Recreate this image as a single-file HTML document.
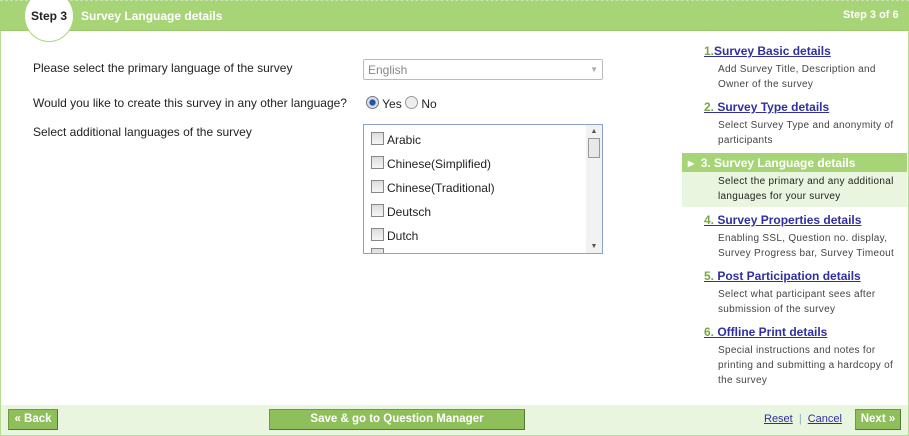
<html><head><style>
body{margin:0;width:909px;height:436px;font-family:"Liberation Sans",sans-serif;background:#fff;position:relative;overflow:hidden}
.a{position:absolute}
.hdr{left:0;top:0;width:909px;height:29px;background:#a8d478;border-top:1px dashed #c8e4b0;border-bottom:1px solid #9cc96c}
.frame{left:0;top:0;width:907px;height:434px;border:1px solid #b6dc94}
.circ{left:24px;top:-10px;width:48px;height:50px;border-radius:50%;background:#fff;border:1px solid #a8d478}
.lbl{font-size:12px;color:#222}
.item{font-size:12px;font-weight:bold;color:#2f2fa0;text-decoration:underline}
.num{color:#78a844;text-decoration:none;display:inline}
.desc{font-size:10px;color:#444;line-height:15px;width:185px;letter-spacing:0.3px}
.btn{background:#8fbf5a;border:1px solid #6e9a42;border-bottom-color:#4f7a2c;border-right-color:#4f7a2c;color:#fff;font-size:11.5px;font-weight:bold;text-align:center;line-height:19px;height:19px}
.cb{display:inline-block;width:11px;height:11px;border:1px solid #888;background:linear-gradient(#ddd,#f6f6f6);vertical-align:-1px;margin-right:3px}
.opt{font-size:12px;color:#222;height:24px;line-height:24px;padding-left:7px}
</style></head><body>
<div class="a frame"></div>
<div class="a hdr"></div>
<div class="a circ"></div>
<div class="a" style="left:31px;top:9px;font-size:12px;font-weight:bold;color:#222">Step 3</div>
<div class="a" style="left:81px;top:9px;font-size:12px;font-weight:bold;color:#fff">Survey Language details</div>
<div class="a" style="left:843px;top:9px;font-size:11px;font-weight:bold;color:#fff">Step 3 of 6</div>

<div class="a lbl" style="left:33px;top:61px">Please select the primary language of the survey</div>
<div class="a lbl" style="left:33px;top:96px">Would you like to create this survey in any other language?</div>
<div class="a lbl" style="left:33px;top:125px">Select additional languages of the survey</div>

<div class="a" style="left:363px;top:59px;border:1px solid #bbb;border-radius:2px;font-size:12px;color:#888;line-height:20px;padding-left:4px;box-sizing:border-box;width:240px;height:21px">English<span style="position:absolute;right:4px;top:0;font-size:8px;color:#aaa">▼</span></div>

<div class="a" style="left:366px;top:96px;font-size:12px;color:#222"><span style="display:inline-block;width:11px;height:11px;border-radius:50%;border:1px solid #777;background:radial-gradient(#1a5aa0 35%,#dde 45%);vertical-align:-1px"></span> Yes <span style="display:inline-block;width:11px;height:11px;border-radius:50%;border:1px solid #999;background:#eee;vertical-align:-1px"></span> No</div>

<div class="a" style="left:363px;top:124px;width:240px;height:130px;border:1px solid #8aa4c4;box-sizing:border-box;overflow:hidden">
<div style="padding-top:3px">
<div class="opt"><span class="cb"></span>Arabic</div>
<div class="opt"><span class="cb"></span>Chinese(Simplified)</div>
<div class="opt"><span class="cb"></span>Chinese(Traditional)</div>
<div class="opt"><span class="cb"></span>Deutsch</div>
<div class="opt"><span class="cb"></span>Dutch</div>
<div class="opt"><span class="cb"></span></div>
</div>
<div style="position:absolute;right:0;top:0;width:16px;height:128px;background:#f2f2f2"><div style="font-size:7px;color:#555;text-align:center;margin-top:3px">▲</div><div style="margin:3px 2px;height:18px;border:1px solid #999;background:#e8e8e8"></div><div style="position:absolute;bottom:3px;width:16px;font-size:7px;color:#555;text-align:center">▼</div></div>
</div>

<div class="a item" style="left:704px;top:44px"><span class="num">1.</span>Survey Basic details</div>
<div class="a desc" style="left:718px;top:62px">Add Survey Title, Description and Owner of the survey</div>
<div class="a item" style="left:704px;top:100px"><span class="num">2. </span>Survey Type details</div>
<div class="a desc" style="left:718px;top:118px">Select Survey Type and anonymity of participants</div>
<div class="a" style="left:682px;top:153px;width:225px;height:19px;background:#a8d478"></div>
<div class="a" style="left:682px;top:172px;width:225px;height:35px;background:#eaf5df"></div>
<div class="a" style="left:688px;top:156px;font-size:12px;font-weight:bold;color:#fff">▸&nbsp; 3. Survey Language details</div>
<div class="a desc" style="left:718px;top:174px;color:#222">Select the primary and any additional languages for your survey</div>
<div class="a item" style="left:704px;top:213px"><span class="num">4. </span>Survey Properties details</div>
<div class="a desc" style="left:718px;top:231px">Enabling SSL, Question no. display, Survey Progress bar, Survey Timeout</div>
<div class="a item" style="left:704px;top:269px"><span class="num">5. </span>Post Participation details</div>
<div class="a desc" style="left:718px;top:287px">Select what participant sees after submission of the survey</div>
<div class="a item" style="left:704px;top:325px"><span class="num">6. </span>Offline Print details</div>
<div class="a desc" style="left:718px;top:343px">Special instructions and notes for printing and submitting a hardcopy of the survey</div>

<div class="a" style="left:1px;top:405px;width:907px;height:30px;background:#eaf5df"></div>
<div class="a btn" style="left:8px;top:409px;width:48px">« Back</div>
<div class="a btn" style="left:269px;top:409px;width:254px">Save &amp; go to Question Manager</div>
<div class="a" style="left:764px;top:413px;font-size:11px;color:#2f2fa0"><u>Reset</u> <span style="color:#8ab;margin:0 3px">|</span> <u>Cancel</u></div>
<div class="a btn" style="left:855px;top:409px;width:44px">Next »</div>
</body></html>
